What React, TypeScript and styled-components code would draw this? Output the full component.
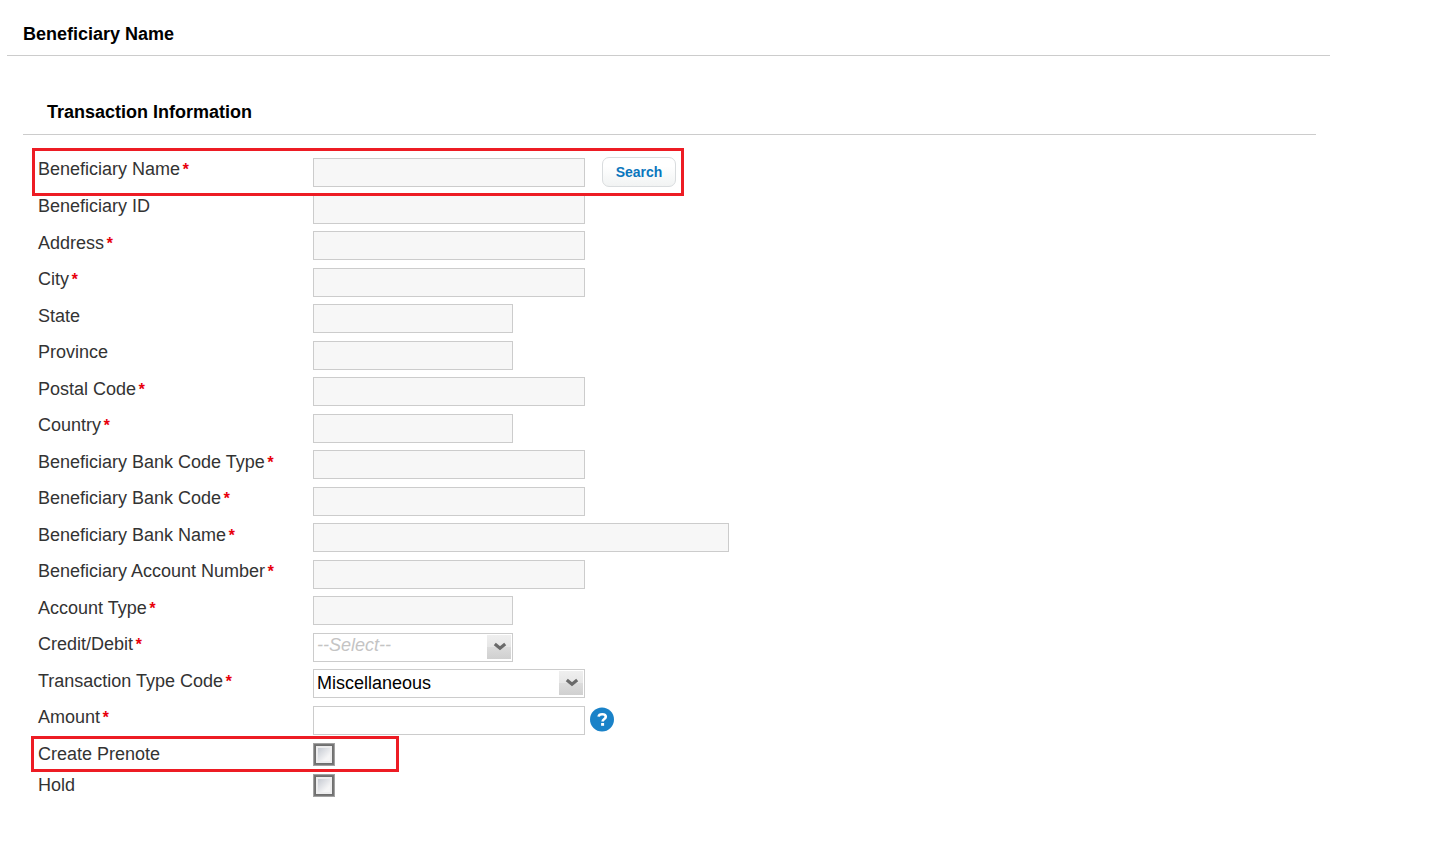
import React from 'react';
import styled, { createGlobalStyle } from 'styled-components';

const GlobalStyle = createGlobalStyle`
  *, *::before, *::after { box-sizing: border-box; }
  body {
    margin: 0;
    background: #fff;
    color: #333;
    font-family: "Liberation Sans", Arial, sans-serif;
    font-size: 18px;
    line-height: 22px;
  }
`;

const Page = styled.main`
  padding: 23px 106px 48px 7px;
`;

const PageTitle = styled.h1`
  margin: 0;
  padding: 0 16px 10px;
  border-bottom: 1px solid #ccc;
  color: #000;
  font-size: 18px;
  line-height: 22px;
`;

const Section = styled.section`
  margin: 45px 14px 0 16px;
`;

const SectionTitle = styled.h2`
  margin: 0;
  padding: 0 24px 11px;
  border-bottom: 1px solid #ccc;
  color: #000;
  font-size: 18px;
  line-height: 22px;
`;

const Form = styled.form`
  padding: 23px 0 0 15px;
`;

const Label = styled.label`
  white-space: nowrap;
`;

const Row = styled.div<{ $compact?: boolean }>`
  position: relative;
  display: grid;
  grid-template-columns: 275px 1fr;
  align-items: start;
  height: ${(p) => (p.$compact ? 31 : 36)}px;

  ${Label} {
    padding-top: ${(p) => (p.$compact ? 1 : 0)}px;
  }

  &:nth-child(odd) {
    height: ${(p) => (p.$compact ? 31 : 37)}px;
  }

  &:nth-child(odd):not(:first-child) ${Label} {
    padding-top: 1px;
  }
`;

const Required = styled.em`
  margin-left: 2px;
  color: #e8000b;
  font-size: 16px;
  font-weight: bold;
  line-height: 16px;
`;

const Control = styled.div`
  display: flex;
  align-items: flex-start;
`;

type Size = 'short' | 'medium' | 'long';
const widths: Record<Size, number> = { short: 200, medium: 272, long: 416 };

const TextInput = styled.input<{ $size: Size }>`
  width: ${(p) => widths[p.$size]}px;
  height: 29px;
  padding: 0 3px;
  border: 1px solid #ccc;
  border-radius: 0;
  background: #fff;
  color: #000;
  font: inherit;

  &:read-only {
    background: #f7f7f7;
  }
`;

const SelectWrap = styled.div<{ $size: Size }>`
  position: relative;
  width: ${(p) => widths[p.$size]}px;
`;

const SelectBox = styled.select<{ $placeholder?: boolean }>`
  display: block;
  width: 100%;
  height: 29px;
  padding: 0 28px ${(p) => (p.$placeholder ? 6 : 2)}px 3px;
  border: 1px solid #ccc;
  border-radius: 0;
  appearance: none;
  background: #fff;
  color: ${(p) => (p.$placeholder ? '#c4c4c4' : '#000')};
  font: inherit;
  font-style: ${(p) => (p.$placeholder ? 'italic' : 'normal')};
`;

const Arrow = styled.span`
  position: absolute;
  top: 2px;
  right: 2px;
  width: 24px;
  height: 24px;
  background: linear-gradient(#efefef 0, #e6e6e6 50%, #dcdcdc 50%, #d0d0d0 100%);
  pointer-events: none;

  svg {
    display: block;
  }
`;

const SearchButton = styled.button`
  width: 74px;
  height: 30px;
  margin: -1px 0 0 17px;
  padding: 0;
  border: 1px solid #d9dcde;
  border-radius: 7px;
  background: linear-gradient(#fff 30%, #f1f3f3);
  color: #0a76bd;
  font: bold 14px/18px "Liberation Sans", Arial, sans-serif;
  cursor: pointer;
`;

const HelpButton = styled.button`
  width: 24px;
  height: 25px;
  margin: 1px 0 0 5px;
  padding: 0;
  border: 0;
  background: none;
  cursor: pointer;

  svg {
    display: block;
  }
`;

const CheckBox = styled.input`
  width: 22px;
  height: 23px;
  margin: 1px 0 0;
  appearance: none;
  border: 1px solid #a2a2a2;
  background: linear-gradient(135deg, #c6cad2, #f5f5f6 75%) center / 12px 13px no-repeat #ededee;
  box-shadow: inset 0 0 0 1px #777, inset 0 0 0 2px #6e6e6e;

  &:checked {
    background: #6c6c6c;
  }
`;

const Highlight = styled.div<{ $kind: 'search' | 'prenote' }>`
  position: absolute;
  z-index: 1;
  top: ${(p) => (p.$kind === 'search' ? -10 : -6)}px;
  left: ${(p) => (p.$kind === 'search' ? -6 : -7)}px;
  width: ${(p) => (p.$kind === 'search' ? 652 : 368)}px;
  height: ${(p) => (p.$kind === 'search' ? 48 : 36)}px;
  border: 3px solid #ed1c24;
  pointer-events: none;
`;

interface Field {
  id: string;
  label: string;
  size: Size;
  required?: boolean;
}

const beneficiaryFields: Field[] = [
  { id: 'beneficiary-id', label: 'Beneficiary ID', size: 'medium' },
  { id: 'address', label: 'Address', size: 'medium', required: true },
  { id: 'city', label: 'City', size: 'medium', required: true },
  { id: 'state', label: 'State', size: 'short' },
  { id: 'province', label: 'Province', size: 'short' },
  { id: 'postal-code', label: 'Postal Code', size: 'medium', required: true },
  { id: 'country', label: 'Country', size: 'short', required: true },
  { id: 'bank-code-type', label: 'Beneficiary Bank Code Type', size: 'medium', required: true },
  { id: 'bank-code', label: 'Beneficiary Bank Code', size: 'medium', required: true },
  { id: 'bank-name', label: 'Beneficiary Bank Name', size: 'long', required: true },
  { id: 'account-number', label: 'Beneficiary Account Number', size: 'medium', required: true },
  { id: 'account-type', label: 'Account Type', size: 'short', required: true },
];

function FieldLabel({ id, label, required }: { id: string; label: string; required?: boolean }) {
  return (
    <Label htmlFor={id}>
      {label}
      {required && <Required>*</Required>}
    </Label>
  );
}

function SelectArrow() {
  return (
    <Arrow>
      <svg width="24" height="24" viewBox="0 0 24 24" fill="none" aria-hidden="true">
        <path d="M7.8 9 L13 13.2 L18.2 9" stroke="#6a6a6a" strokeWidth="3.2" />
      </svg>
    </Arrow>
  );
}

export default function App() {
  const [direction, setDirection] = React.useState('');
  const [typeCode, setTypeCode] = React.useState('misc');

  return (
    <>
      <GlobalStyle />
      <Page>
        <PageTitle>Beneficiary Name</PageTitle>
        <Section>
          <SectionTitle>Transaction Information</SectionTitle>
          <Form onSubmit={(e) => e.preventDefault()}>
            <Row>
              <FieldLabel id="beneficiary-name" label="Beneficiary Name" required />
              <Control>
                <TextInput id="beneficiary-name" type="text" $size="medium" readOnly />
                <SearchButton type="button">Search</SearchButton>
              </Control>
              <Highlight $kind="search" />
            </Row>
            {beneficiaryFields.map((f) => (
              <Row key={f.id}>
                <FieldLabel id={f.id} label={f.label} required={f.required} />
                <Control>
                  <TextInput id={f.id} type="text" $size={f.size} readOnly />
                </Control>
              </Row>
            ))}
            <Row>
              <FieldLabel id="credit-debit" label="Credit/Debit" required />
              <SelectWrap $size="short">
                <SelectBox
                  id="credit-debit"
                  value={direction}
                  $placeholder={direction === ''}
                  onChange={(e) => setDirection(e.target.value)}
                >
                  <option value="">--Select--</option>
                  <option value="credit">Credit</option>
                  <option value="debit">Debit</option>
                </SelectBox>
                <SelectArrow />
              </SelectWrap>
            </Row>
            <Row>
              <FieldLabel id="type-code" label="Transaction Type Code" required />
              <SelectWrap $size="medium">
                <SelectBox id="type-code" value={typeCode} onChange={(e) => setTypeCode(e.target.value)}>
                  <option value="misc">Miscellaneous</option>
                </SelectBox>
                <SelectArrow />
              </SelectWrap>
            </Row>
            <Row>
              <FieldLabel id="amount" label="Amount" required />
              <Control>
                <TextInput id="amount" type="text" $size="medium" />
                <HelpButton type="button" aria-label="Help">
                  <svg width="24" height="25" viewBox="0 0 24 25" fill="none" aria-hidden="true">
                    <circle cx="12" cy="12.5" r="12" fill="#1a82c8" />
                    <path
                      d="M8.6 9.6 C8.9 7.8 10.3 7.3 12.2 7.3 C14.5 7.3 15.8 8.2 15.8 9.8 C15.8 12 12.6 12 12.6 14.6"
                      stroke="#fff"
                      strokeWidth="2.6"
                    />
                    <rect x="11.1" y="16" width="3" height="2.8" fill="#fff" />
                  </svg>
                </HelpButton>
              </Control>
            </Row>
            <Row $compact>
              <FieldLabel id="prenote" label="Create Prenote" />
              <Control>
                <CheckBox id="prenote" type="checkbox" />
              </Control>
              <Highlight $kind="prenote" />
            </Row>
            <Row $compact>
              <FieldLabel id="hold" label="Hold" />
              <Control>
                <CheckBox id="hold" type="checkbox" />
              </Control>
            </Row>
          </Form>
        </Section>
      </Page>
    </>
  );
}
